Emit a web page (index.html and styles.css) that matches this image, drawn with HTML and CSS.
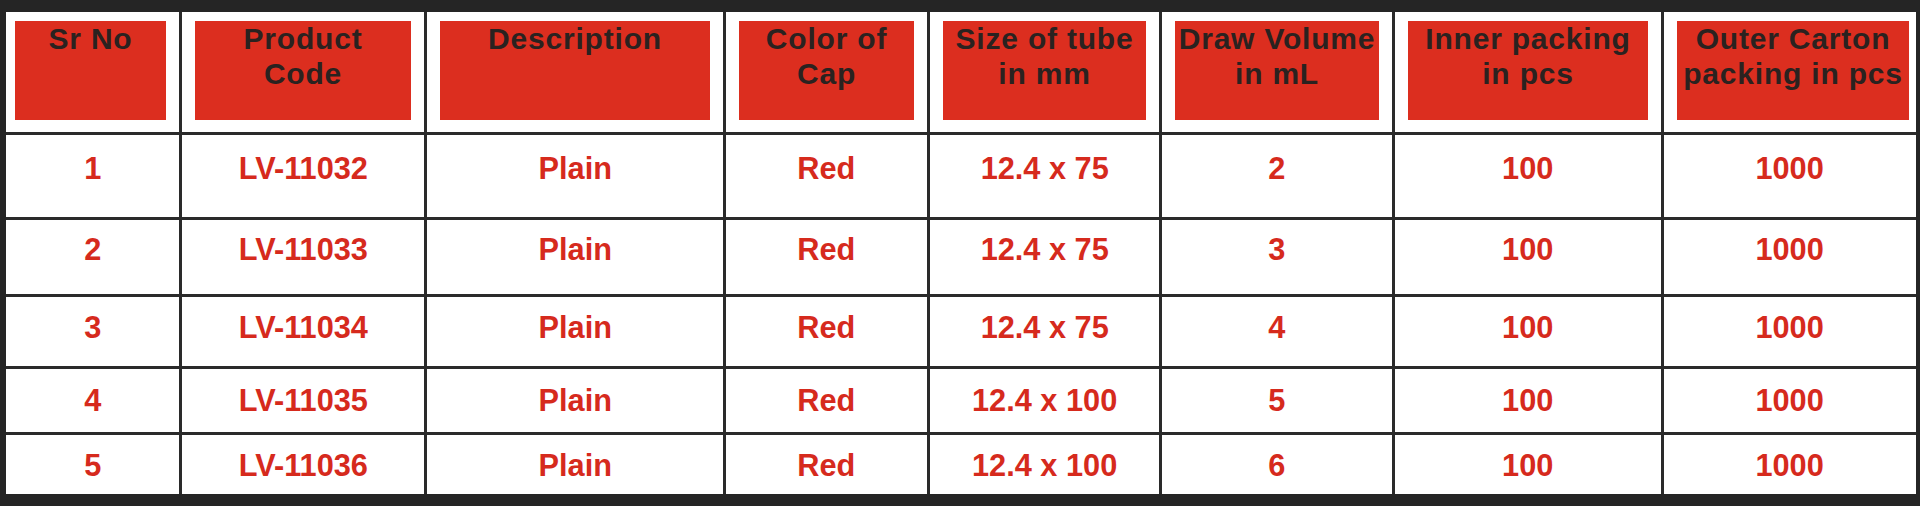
FILE: index.html
```html
<!DOCTYPE html>
<html lang="en">
<head>
<meta charset="utf-8">
<title>Product Table</title>
<link rel="stylesheet" href="styles.css">
</head>
<body>
<div class="frame">
  <div class="grid">
    <div class="hcell first"><div class="hbox">Sr No</div></div>
    <div class="hcell"><div class="hbox">Product<br>Code</div></div>
    <div class="hcell"><div class="hbox">Description</div></div>
    <div class="hcell"><div class="hbox">Color of<br>Cap</div></div>
    <div class="hcell"><div class="hbox">Size of tube<br>in mm</div></div>
    <div class="hcell"><div class="hbox">Draw Volume<br>in mL</div></div>
    <div class="hcell"><div class="hbox">Inner packing<br>in pcs</div></div>
    <div class="hcell last"><div class="hbox">Outer Carton<br>packing in pcs</div></div>

    <div class="cell r1"><span>1</span></div><div class="cell r1"><span>LV-11032</span></div><div class="cell r1"><span>Plain</span></div><div class="cell r1"><span>Red</span></div><div class="cell r1"><span>12.4 x 75</span></div><div class="cell r1"><span>2</span></div><div class="cell r1"><span>100</span></div><div class="cell r1"><span>1000</span></div>

    <div class="cell r2"><span>2</span></div><div class="cell r2"><span>LV-11033</span></div><div class="cell r2"><span>Plain</span></div><div class="cell r2"><span>Red</span></div><div class="cell r2"><span>12.4 x 75</span></div><div class="cell r2"><span>3</span></div><div class="cell r2"><span>100</span></div><div class="cell r2"><span>1000</span></div>

    <div class="cell r3"><span>3</span></div><div class="cell r3"><span>LV-11034</span></div><div class="cell r3"><span>Plain</span></div><div class="cell r3"><span>Red</span></div><div class="cell r3"><span>12.4 x 75</span></div><div class="cell r3"><span>4</span></div><div class="cell r3"><span>100</span></div><div class="cell r3"><span>1000</span></div>

    <div class="cell r4"><span>4</span></div><div class="cell r4"><span>LV-11035</span></div><div class="cell r4"><span>Plain</span></div><div class="cell r4"><span>Red</span></div><div class="cell r4"><span>12.4 x 100</span></div><div class="cell r4"><span>5</span></div><div class="cell r4"><span>100</span></div><div class="cell r4"><span>1000</span></div>

    <div class="cell r5"><span>5</span></div><div class="cell r5"><span>LV-11036</span></div><div class="cell r5"><span>Plain</span></div><div class="cell r5"><span>Red</span></div><div class="cell r5"><span>12.4 x 100</span></div><div class="cell r5"><span>6</span></div><div class="cell r5"><span>100</span></div><div class="cell r5"><span>1000</span></div>
  </div>
</div>
</body>
</html>
```
FILE: styles.css
```css
html, body {
  margin: 0;
  padding: 0;
  background: #252525;
}
body {
  width: 1920px;
  height: 506px;
  overflow: hidden;
  font-family: "Liberation Sans", Arial, sans-serif;
}
.frame {
  padding: 12px 4px 12px 6px;
  height: 506px;
  box-sizing: border-box;
}
.grid {
  display: grid;
  grid-template-columns: 173px 242px 296px 201px 229px 230px 266px 252px;
  grid-template-rows: 120px 82px 74px 69px 63px 59px;
  gap: 3px;
  background: #2a2a2a;
}
.hcell {
  background: #ffffff;
  padding: 9px 13px 12px 13px;
  display: flex;
}
.hcell.first { padding-left: 9px; }
.hcell.last { padding-right: 7px; padding-left: 13px; }
.hbox {
  flex: 1;
  background: #dc2e1f;
  color: #2a2220;
  font-family: "Liberation Sans", Arial, sans-serif;
  font-weight: bold;
  font-size: 30px;
  line-height: 35px;
  letter-spacing: 0.8px;
  text-align: center;
  white-space: nowrap;
  display: flex;
  justify-content: center;
}
.cell {
  background: #ffffff;
  color: #d62a1d;
  font-family: "Liberation Sans", Arial, sans-serif;
  font-weight: bold;
  font-size: 32px;
  line-height: 36px;
  text-align: center;
  padding-top: 12px;
  box-sizing: border-box;
  white-space: nowrap;
}
.cell span {
  display: inline-block;
  transform: scaleX(0.96);
}
.cell.r1 { padding-top: 15px; }
.cell.r2 { padding-top: 11px; }
.cell.r3 { padding-top: 12px; }
.cell.r4 { padding-top: 13px; }
.cell.r5 { padding-top: 12px; }
```
